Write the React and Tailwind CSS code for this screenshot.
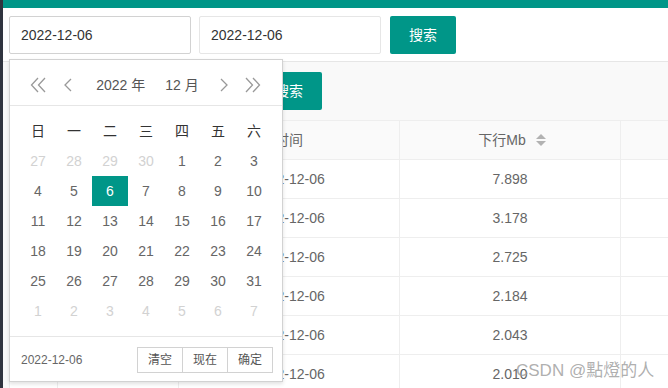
import React from 'react';

const weekDays = ['日', '一', '二', '三', '四', '五', '六'];

const calendar = [
  [27, 28, 29, 30, 1, 2, 3],
  [4, 5, 6, 7, 8, 9, 10],
  [11, 12, 13, 14, 15, 16, 17],
  [18, 19, 20, 21, 22, 23, 24],
  [25, 26, 27, 28, 29, 30, 31],
  [1, 2, 3, 4, 5, 6, 7],
];

const rows = [
  { date: '2022-12-06', down: '7.898' },
  { date: '2022-12-06', down: '3.178' },
  { date: '2022-12-06', down: '2.725' },
  { date: '2022-12-06', down: '2.184' },
  { date: '2022-12-06', down: '2.043' },
  { date: '2022-12-06', down: '2.010' },
];

const SingleArrow = ({ dir }) => (
  <svg width="10" height="14" viewBox="0 0 10 14" fill="none" stroke="#999" strokeWidth="1.3">
    {dir === 'left' ? <path d="M8 1 L2 7 L8 13" /> : <path d="M2 1 L8 7 L2 13" />}
  </svg>
);

const DoubleArrow = ({ dir }) => (
  <svg width="17" height="16" viewBox="0 0 17 16" fill="none" stroke="#999" strokeWidth="1.3">
    {dir === 'left' ? (
      <>
        <path d="M8 1 L1.5 8 L8 15" />
        <path d="M15 1 L8.5 8 L15 15" />
      </>
    ) : (
      <>
        <path d="M2 1 L8.5 8 L2 15" />
        <path d="M9 1 L15.5 8 L9 15" />
      </>
    )}
  </svg>
);

const SortIcon = () => (
  <svg width="10" height="12" viewBox="0 0 10 12" fill="#b2b2b2">
    <polygon points="0,5 5,0 10,5" />
    <polygon points="0,7 10,7 5,12" />
  </svg>
);

const DatePopup = () => (
  <div className="absolute left-[9px] top-[59px] w-[274px] h-[323px] bg-white border border-[#d2d2d2] shadow-[0_2px_4px_rgba(0,0,0,0.12)] flex flex-col">
    {/* Header */}
    <div className="h-[46px] shrink-0 border-b border-[#e6e6e6] flex items-center pt-[5px] pl-[20px] pr-[21px] text-[14px] text-[#555]">
      <div className="flex items-center gap-[16px]">
        <DoubleArrow dir="left" />
        <SingleArrow dir="left" />
      </div>
      <div className="flex-1 flex justify-center gap-[20px] pl-[3px]">
        <span>2022 年</span>
        <span>12 月</span>
      </div>
      <div className="flex items-center gap-[15px]">
        <SingleArrow dir="right" />
        <DoubleArrow dir="right" />
      </div>
    </div>

    {/* Days */}
    <div className="px-[10px] py-[10px] h-[230px] shrink-0">
      <div className="grid grid-cols-7 h-[30px] text-[14px] text-[#333]">
        {weekDays.map((d) => (
          <div key={d} className="flex items-center justify-center">{d}</div>
        ))}
      </div>
      {calendar.map((week, wi) => (
        <div key={wi} className="grid grid-cols-7 h-[30px] text-[14px]">
          {week.map((d, di) => {
            const other = (wi === 0 && d > 20) || wi === 5;
            const selected = wi === 1 && d === 6;
            return (
              <div
                key={di}
                className={`flex items-center justify-center ${
                  selected ? 'bg-[#009688] text-white' : other ? 'text-[#d2d2d2]' : 'text-[#666]'
                }`}
              >
                {d}
              </div>
            );
          })}
        </div>
      ))}
    </div>

    {/* Footer */}
    <div className="flex-1 border-t border-[#e6e6e6] flex items-center justify-between pl-[11px] pr-[9px] pt-px">
      <span className="text-[12px] text-[#666]">2022-12-06</span>
      <div className="flex text-[12px] text-[#555]">
        <button className="w-[46px] h-[26px] border border-[#d2d2d2] bg-white">清空</button>
        <button className="w-[46px] h-[26px] border border-[#d2d2d2] bg-white -ml-px">现在</button>
        <button className="w-[46px] h-[26px] border border-[#d2d2d2] bg-white -ml-px">确定</button>
      </div>
    </div>
  </div>
);

export default function App() {
  return (
    <div className="relative w-[668px] h-[388px] overflow-hidden flex bg-[#f9f9f9] font-['Liberation_Sans','Noto_Sans_CJK_SC',sans-serif]">
      {/* Side strip */}
      <div className="w-[3px] shrink-0 bg-[#30343f]" />

      <div className="flex-1 flex flex-col min-w-0">
        <div className="h-[8px] shrink-0 bg-[#009688]" />

        {/* Search row */}
        <div className="shrink-0 bg-white border-b border-[#e6e6e6] pl-[6px] pt-[8px] pb-[7px] flex items-center">
          <div className="w-[182px] h-[38px] border border-[#d2d2d2] rounded-[2px] flex items-center pl-[11px] text-[14px] text-[#333]">
            2022-12-06
          </div>
          <div className="ml-[8px] w-[182px] h-[38px] border border-[#e6e6e6] rounded-[2px] flex items-center pl-[11px] text-[14px] text-[#333]">
            2022-12-06
          </div>
          <button className="ml-[9px] w-[66px] h-[38px] bg-[#009688] rounded-[2px] text-white text-[14px]">
            搜索
          </button>
        </div>

        {/* Second toolbar row */}
        <div className="shrink-0 pl-[6px] py-[10px] flex items-center">
          <div className="w-[237px] h-[38px] border border-[#e6e6e6] bg-white rounded-[2px]" />
          <button className="ml-[10px] w-[66px] h-[38px] bg-[#009688] rounded-[2px] text-white text-[14px]">
            搜索
          </button>
        </div>

        {/* Table */}
        <div className="shrink-0 ml-[6px] w-[900px] bg-white border-l border-t border-[#eee] text-[14px] text-[#666]">
          <div className="flex h-[39px] bg-[#fafafa] border-b border-[#eee]">
            <div className="w-[48px] border-r border-[#eee]" />
            <div className="w-[121px] border-r border-[#eee]" />
            <div className="w-[221px] border-r border-[#eee] flex items-center justify-center">时间</div>
            <div className="w-[221px] border-r border-[#eee] flex items-center justify-center gap-[10px] pl-[4px]">
              <span>下行Mb</span>
              <SortIcon />
            </div>
            <div className="w-[221px] border-r border-[#eee]" />
          </div>
          {rows.map((r, i) => (
            <div key={i} className="flex h-[39px] border-b border-[#eee]">
              <div className="w-[48px] border-r border-[#eee]" />
              <div className="w-[121px] border-r border-[#eee]" />
              <div className="w-[221px] border-r border-[#eee] flex items-center justify-center">{r.date}</div>
              <div className="w-[221px] border-r border-[#eee] flex items-center justify-center">{r.down}</div>
              <div className="w-[221px] border-r border-[#eee]" />
            </div>
          ))}
        </div>
      </div>

      <DatePopup />

      {/* Watermark */}
      <div className="absolute left-[516px] top-[358px] text-[17px] text-[#9a9a9a]/80 whitespace-nowrap">
        CSDN @點燈的人
      </div>
    </div>
  );
}
